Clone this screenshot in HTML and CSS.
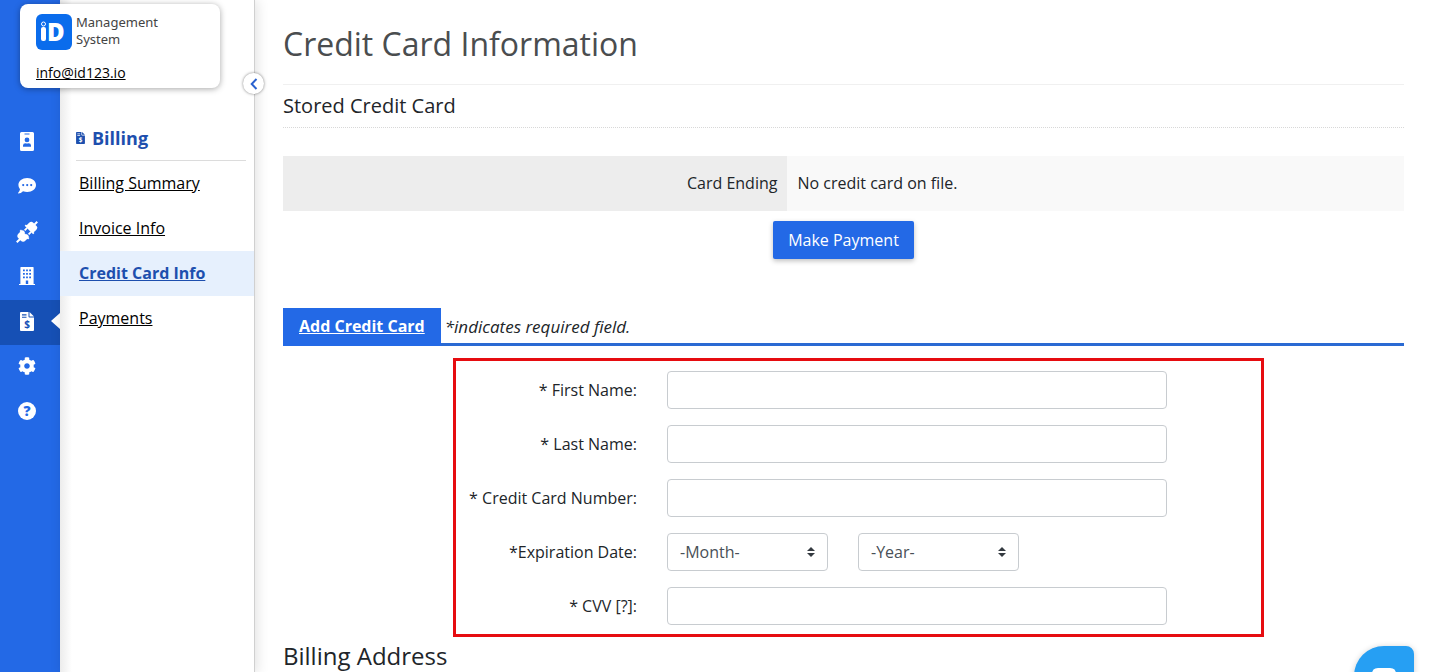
FILE: index.html
```html
<!DOCTYPE html>
<html lang="en">
<head>
    <meta charset="UTF-8">
    <meta name="viewport" content="width=device-width, initial-scale=1.0">
    <title>Credit Card Information</title>
    <link rel="stylesheet" href="styles.css">
</head>
<body>
    <div class="page">
        <!-- icon rail -->
        <nav class="rail" aria-label="Main">
            <a class="rail-item" href="#" aria-label="ID cards">
                <svg width="14" height="19" viewBox="0 0 14 19"><path fill="currentColor" fill-rule="evenodd" d="M1.500 0H12.500Q14 0 14 1.500V17.500Q14 19 12.500 19H1.500Q0 19 0 17.500V1.500Q0 0 1.500 0ZM4.500 1.500V2.500H9.500V1.500ZM7 5.500A2.400 2.400 0 1 0 7 10.300A2.400 2.400 0 1 0 7 5.500ZM3 14.800H11V13.500Q11 11.200 8.500 11.200Q7 11.900 5.500 11.200Q3 11.200 3 13.500Z"/></svg>
            </a>
            <a class="rail-item" href="#" aria-label="Messages">
                <svg width="18" height="16" viewBox="0 0 18 16"><path fill="currentColor" fill-rule="evenodd" d="M9.200 0C14.200 0 18 3 18 7S14.200 14 9.200 14Q7 14 5 13.200Q3 15.500 0.300 15.500Q-0.200 15.300 0.200 14.800Q1.800 13 2 11.300Q0.400 9.400 0.400 7C0.400 3 4.200 0 9.200 0ZM5.200 6A1.100 1.100 0 1 0 5.200 8.200A1.100 1.100 0 1 0 5.200 6ZM9.200 6A1.100 1.100 0 1 0 9.200 8.200A1.100 1.100 0 1 0 9.200 6ZM13.200 6A1.100 1.100 0 1 0 13.200 8.200A1.100 1.100 0 1 0 13.200 6Z"/></svg>
            </a>
            <a class="rail-item" href="#" aria-label="Integrations">
                <svg width="22" height="24" viewBox="0 -2 22 24">
                    <g transform="rotate(45 11 11)" fill="currentColor">
                        <path d="M10 -3.500H12V0H13.500Q16 0 16 3V6.500H17V8.300H5V6.500H6V3Q6 0 8.500 0H10Z"/>
                        <path d="M7.300 8H9.100V11.500H7.300ZM12.900 8H14.700V11.500H12.900Z"/>
                        <path d="M5 13.500H6.600V12.500H9.800V13.500H12.200V12.500H15.400V13.500H17V15.500H16V18Q16 21.500 12.500 21.500H12V25.500H10V21.500H9.500Q6 21.500 6 18V15.500H5Z"/>
                    </g>
                </svg>
            </a>
            <a class="rail-item" href="#" aria-label="Organization">
                <svg width="16" height="18" viewBox="0 0 16 18"><path fill="currentColor" fill-rule="evenodd" d="M2 0H14Q14.600 0 14.600 0.600V17H16V18H0V17H1.400V0.600Q1.400 0 2 0ZM4 2.500V4.300H5.800V2.500ZM7.100 2.500V4.300H8.900V2.500ZM10.200 2.500V4.300H12V2.500ZM4 6V7.800H5.800V6ZM7.100 6V7.800H8.900V6ZM10.200 6V7.800H12V6ZM4 9.500V11.300H5.800V9.500ZM7.100 9.500V11.300H8.900V9.500ZM10.200 9.500V11.300H12V9.500ZM6.800 13.500V17H9.200V13.500Z"/></svg>
            </a>
            <a class="rail-item active" href="#" aria-label="Billing">
                <svg width="14" height="19" viewBox="0 0 14 19">
                    <path fill="currentColor" fill-rule="evenodd" d="M1 0H8.500V4.500Q8.500 5.500 9.500 5.500H14V18Q14 19 13 19H1Q0 19 0 18V1Q0 0 1 0ZM2 2.300V3.400H6.500V2.300ZM2 4.700V5.800H6.500V4.700Z"/>
                    <path fill="currentColor" d="M9.500 0L14 4.500H9.500Z"/>
                    <text class="invoice-sign" x="7" y="16">$</text>
                </svg>
            </a>
            <a class="rail-item" href="#" aria-label="Settings">
                <svg width="18" height="18" viewBox="0 0 512 512"><path fill="currentColor" d="M487.400 315.700l-42.600-24.600c4.300-23.200 4.300-47 0-70.200l42.600-24.600c4.900-2.800 7.100-8.600 5.500-14-11.100-35.600-30-67.800-54.700-94.600-3.800-4.100-10-5.100-14.800-2.300L380.800 110c-17.900-15.400-38.500-27.300-60.800-35.100V25.800c0-5.600-3.900-10.500-9.400-11.700-36.700-8.200-74.300-7.800-109.200 0-5.500 1.200-9.400 6.100-9.400 11.700V75c-22.200 7.900-42.800 19.800-60.800 35.100L88.700 85.500c-4.900-2.800-11-1.900-14.800 2.300-24.700 26.700-43.600 58.900-54.700 94.600-1.700 5.400.6 11.200 5.500 14L67.300 221c-4.300 23.200-4.300 47 0 70.200l-42.600 24.600c-4.900 2.800-7.100 8.600-5.500 14 11.100 35.600 30 67.800 54.700 94.600 3.800 4.100 10 5.100 14.800 2.300l42.600-24.600c17.900 15.400 38.500 27.300 60.800 35.100v49.200c0 5.600 3.900 10.500 9.400 11.700 36.700 8.200 74.300 7.800 109.200 0 5.500-1.200 9.400-6.100 9.400-11.700v-49.200c22.200-7.900 42.800-19.800 60.800-35.100l42.600 24.600c4.900 2.800 11 1.900 14.800-2.300 24.700-26.700 43.600-58.900 54.700-94.600 1.500-5.500-.7-11.300-5.600-14.100zM256 336c-44.100 0-80-35.900-80-80s35.900-80 80-80 80 35.900 80 80-35.900 80-80 80z"/></svg>
            </a>
            <a class="rail-item" href="#" aria-label="Help">
                <svg width="18" height="18" viewBox="0 0 18 18"><circle cx="9" cy="9" r="9" fill="currentColor"/><text class="help-sign" x="9" y="14">?</text></svg>
            </a>
        </nav>

        <!-- billing menu -->
        <aside class="submenu">
            <h2 class="submenu-title">
                <svg width="9" height="12" viewBox="0 0 14 19" aria-hidden="true">
                    <path fill="currentColor" fill-rule="evenodd" d="M1 0H8.500V4.500Q8.500 5.500 9.500 5.500H14V18Q14 19 13 19H1Q0 19 0 18V1Q0 0 1 0ZM2 2.300V3.400H6.500V2.300ZM2 4.700V5.800H6.500V4.700Z"/>
                    <path fill="currentColor" d="M9.500 0L14 4.500H9.500Z"/>
                    <text class="invoice-sign" x="7" y="16">$</text>
                </svg>
                Billing
            </h2>
            <ul class="submenu-list">
                <li><a href="#">Billing Summary</a></li>
                <li><a href="#">Invoice Info</a></li>
                <li class="current"><a href="#">Credit Card Info</a></li>
                <li><a href="#">Payments</a></li>
            </ul>
            <button type="button" class="collapse" aria-label="Collapse menu">
                <svg width="8" height="12" viewBox="0 0 8 12"><path d="M6.500 1L1.700 6L6.500 11" fill="none" stroke="currentColor" stroke-width="2"/></svg>
            </button>
        </aside>

        <div class="brand">
            <div class="brand-logo">
                <svg width="36" height="36" viewBox="0 0 36 36" aria-hidden="true">
                    <rect width="36" height="36" rx="6" fill="#0a6cec"/>
                    <rect x="5" y="13" width="5" height="14" rx="2" fill="#fff"/>
                    <circle cx="7.500" cy="10" r="2" fill="none" stroke="#fff"/>
                    <text class="logo-letter" x="11" y="27">D</text>
                </svg>
                <span>Management<br>System</span>
            </div>
            <a href="#">info@id123.io</a>
        </div>

        <main class="content">
            <h1>Credit Card Information</h1>
            <h3>Stored Credit Card</h3>

            <table class="stored">
                <tr>
                    <th scope="row">Card Ending</th>
                    <td>No credit card on file.</td>
                </tr>
            </table>
            <div class="pay">
                <button type="button" class="btn">Make Payment</button>
            </div>

            <div class="tabs">
                <a class="tab" href="#">Add Credit Card</a>
                <em>*indicates required field.</em>
            </div>

            <form>
                <div class="card-form">
                    <label for="firstName">* First Name:</label>
                    <input type="text" id="firstName">
                    <label for="lastName">* Last Name:</label>
                    <input type="text" id="lastName">
                    <label for="cardNumber">* Credit Card Number:</label>
                    <input type="text" id="cardNumber">
                    <label for="month">*Expiration Date:</label>
                    <div class="expiry">
                        <select id="month">
                            <option>-Month-</option>
                        </select>
                        <select id="year" aria-label="Expiration year">
                            <option>-Year-</option>
                        </select>
                    </div>
                    <label for="cvv">* CVV [?]:</label>
                    <input type="text" id="cvv">
                </div>
                <h2 class="address-title">Billing Address</h2>
            </form>
        </main>
    </div>

    <button type="button" class="chat" aria-label="Open chat">
        <svg width="24" height="26" viewBox="0 0 24 26"><path fill="#fff" fill-rule="evenodd" d="M6 0H18Q24 0 24 6V26L18 22H4Q0 22 0 18V6Q0 0 6 0ZM5 14Q12 20 19 14V15.500Q12 21 5 15.500Z"/></svg>
    </button>
</body>
</html>
```

FILE: styles.css
```css
* {
    box-sizing: border-box;
}
body {
    margin: 0;
    font-family: "Open Sans", "Noto Sans", sans-serif;
    font-size: 16px;
    line-height: 24px;
    color: #212529;
    background-color: #fff;
    overflow: hidden;
}
.page {
    display: flex;
    min-height: 100vh;
    position: relative;
}

/* icon rail */
.rail {
    width: 60px;
    flex: none;
    padding-top: 120px;
    background-color: #2369e6;
}
.rail-item {
    display: flex;
    align-items: center;
    justify-content: center;
    height: 45px;
    padding: 0 6px 3px 0;
    color: #fff;
    position: relative;
}
.rail-item.active {
    background-color: #1650b5;
}
.rail-item.active::after {
    content: "";
    position: absolute;
    right: 0;
    top: 13px;
    border: 8px solid transparent;
    border-right: 9px solid #fff;
    border-left: 0;
}
.rail svg {
    overflow: visible;
}
.invoice-sign {
    font: bold 10px "Open Sans", sans-serif;
    text-anchor: middle;
    fill: #1650b5;
}
.submenu .invoice-sign {
    fill: #fff;
}
.help-sign {
    font: 800 14px "Open Sans", sans-serif;
    text-anchor: middle;
    fill: #2369e6;
}

/* billing menu */
.submenu {
    width: 195px;
    flex: none;
    padding-top: 116px;
    position: relative;
    border-right: 1px solid #d0d0d0;
    background: linear-gradient(to right, #ececec, #fff 12px);
    box-shadow: 2px 0 12px rgba(0, 0, 0, 0.12);
}
.submenu-title {
    display: flex;
    align-items: center;
    gap: 7px;
    height: 45px;
    margin: 0 8px 0 16px;
    border-bottom: 1px solid #dcdcdc;
    font-size: 18px;
    color: #1d4fae;
}
.submenu-list {
    list-style: none;
    margin: 0;
    padding: 0;
}
.submenu-list li {
    height: 45px;
    padding: 10px 19px;
}
.submenu-list a {
    color: #000;
}
.submenu-list .current {
    background-color: #e6f0fd;
}
.submenu-list .current a {
    color: #1d4fae;
    font-weight: bold;
}
.collapse {
    position: absolute;
    top: 73px;
    right: -10px;
    width: 21px;
    height: 21px;
    padding: 0;
    display: flex;
    align-items: center;
    justify-content: center;
    border: 0;
    border-radius: 50%;
    background-color: #fff;
    box-shadow: 0 0 3px rgba(0, 0, 0, 0.5);
    color: #2a62cf;
}

.brand {
    position: absolute;
    left: 20px;
    top: 4px;
    width: 200px;
    height: 84px;
    padding: 10px 16px;
    border-radius: 8px;
    background-color: #fff;
    box-shadow: 0 1px 6px rgba(0, 0, 0, 0.35);
    font-size: 14px;
}
.brand-logo {
    display: flex;
    gap: 4px;
    margin-bottom: 11px;
    font-family: "Noto Sans", sans-serif;
    font-size: 13px;
    line-height: 17px;
    color: #444;
}
.brand a {
    color: #000;
}
.logo-letter {
    font: 800 24px "Open Sans", sans-serif;
    fill: #fff;
}

/* main column */
.content {
    flex: 1;
    padding: 20px 25px 0 28px;
}
h1 {
    margin: 0;
    padding-bottom: 16px;
    border-bottom: 1px solid #f0f0f0;
    font-size: 32px;
    font-weight: normal;
    line-height: 48px;
    color: #4a4d4f;
}
h3 {
    margin: 0 0 28px;
    padding: 9px 0;
    border-bottom: 1px dotted #d8d8d8;
    font-size: 20px;
    font-weight: normal;
}
.stored {
    width: 100%;
    height: 55px;
    border-collapse: collapse;
}
.stored th {
    width: 45%;
    padding: 0 10px 1px;
    font-weight: normal;
    text-align: right;
    background-color: #ededed;
}
.stored td {
    padding: 0 10px 1px;
    background-color: #f9f9f9;
}
.pay {
    display: flex;
    justify-content: center;
    padding: 10px 0 49px;
}
.btn {
    height: 38px;
    padding: 0 15px;
    border: 0;
    border-radius: 2px;
    background-color: #2369e6;
    box-shadow: 0 2px 5px rgba(0, 0, 0, 0.25);
    font: 500 16px "Open Sans", sans-serif;
    color: #fff;
}
.tabs {
    display: flex;
    gap: 4px;
    height: 38px;
    border-bottom: 3px solid #2a6ad3;
}
.tab {
    height: 38px;
    padding: 6px 16px;
    background-color: #2369e6;
    font-weight: bold;
    color: #fff;
}
.tabs em {
    padding-top: 7px;
    font-size: 17px;
}
.card-form {
    display: grid;
    grid-template-columns: 181px 1fr;
    gap: 16px 30px;
    align-items: center;
    margin: 12px 140px 0 170px;
    padding: 10px 94px 9px 0;
    border: 3px solid #e60c10;
}
.card-form label {
    text-align: right;
}
.card-form input,
.card-form select {
    height: 38px;
    padding: 0 12px;
    border: 1px solid #c8ccd0;
    border-radius: 4px;
    background-color: #fff;
    font: 16px "Open Sans", sans-serif;
    color: #495057;
}
.card-form input {
    width: 100%;
}
.expiry {
    display: flex;
    gap: 30px;
}
.card-form select {
    width: 161px;
    appearance: none;
    background: #fff url("data:image/svg+xml,%3Csvg xmlns='http://www.w3.org/2000/svg' viewBox='0 0 4 5'%3E%3Cpath fill='%23343a40' d='M2 0L0 2h4zm0 5L0 3h4z'/%3E%3C/svg%3E") no-repeat right 12px center / 8px 10px;
}
.address-title {
    margin: 1px 0 0;
    font-size: 24px;
    font-weight: normal;
    line-height: 36px;
}

/* chat launcher */
.chat {
    position: fixed;
    right: 15px;
    bottom: -34px;
    width: 60px;
    height: 60px;
    padding: 13px 0 0;
    border: 0;
    border-radius: 30px 8px 30px 30px;
    background-color: #269ff3;
    box-shadow: 0 1px 6px rgba(0, 0, 0, 0.2);
}
```
